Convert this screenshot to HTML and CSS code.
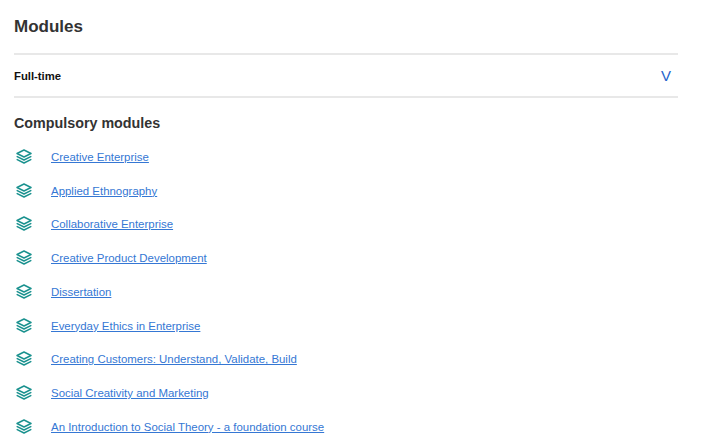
FILE: index.html
```html
<!DOCTYPE html>
<html lang="en">
<head>
    <meta charset="UTF-8">
    <title>Modules</title>
    <link rel="stylesheet" href="styles.css">
</head>
<body>
    <svg class="icon-defs" width="0" height="0" aria-hidden="true">
        <symbol id="layers" viewBox="0 0 16 15">
            <path d="M8 1 L15 4.5 L8 8 L1 4.5 Z" fill="none" stroke="currentColor" stroke-width="1.5" stroke-linejoin="round"/>
            <path d="M1.2 7.6 L8 11 L14.8 7.6" fill="none" stroke="currentColor" stroke-width="1.5" stroke-linecap="round" stroke-linejoin="round"/>
            <path d="M1.2 10.6 L8 14 L14.8 10.6" fill="none" stroke="currentColor" stroke-width="1.5" stroke-linecap="round" stroke-linejoin="round"/>
        </symbol>
    </svg>

    <div class="container">
        <h1>Modules</h1>

        <div class="accordion">
            <span class="accordion-title">Full-time</span>
            <span class="accordion-toggle">V</span>
        </div>

        <h2>Compulsory modules</h2>

        <ul class="module-list">
            <li><svg class="module-icon"><use href="#layers"/></svg><a href="#">Creative Enterprise</a></li>
            <li><svg class="module-icon"><use href="#layers"/></svg><a href="#">Applied Ethnography</a></li>
            <li><svg class="module-icon"><use href="#layers"/></svg><a href="#">Collaborative Enterprise</a></li>
            <li><svg class="module-icon"><use href="#layers"/></svg><a href="#">Creative Product Development</a></li>
            <li><svg class="module-icon"><use href="#layers"/></svg><a href="#">Dissertation</a></li>
            <li><svg class="module-icon"><use href="#layers"/></svg><a href="#">Everyday Ethics in Enterprise</a></li>
            <li><svg class="module-icon"><use href="#layers"/></svg><a href="#">Creating Customers: Understand, Validate, Build</a></li>
            <li><svg class="module-icon"><use href="#layers"/></svg><a href="#">Social Creativity and Marketing</a></li>
            <li><svg class="module-icon"><use href="#layers"/></svg><a href="#">An Introduction to Social Theory - a foundation course</a></li>
        </ul>
    </div>
</body>
</html>
```

FILE: styles.css
```css
* {
    margin: 0;
    padding: 0;
    box-sizing: border-box;
}

html, body {
    height: 447px;
    overflow: hidden;
}

body {
    font-family: "Liberation Sans", Arial, sans-serif;
    background-color: white;
    color: #333;
}

.icon-defs {
    position: absolute;
}

.container {
    width: 664px;
    margin-left: 14px;
    padding-top: 16px;
}

h1 {
    font-size: 17px;
    line-height: 21px;
    font-weight: bold;
    margin-bottom: 16px;
}

.accordion {
    height: 45px;
    display: flex;
    align-items: center;
    justify-content: space-between;
    border-top: 2px solid #e8e8e8;
    border-bottom: 2px solid #e8e8e8;
}

.accordion-title {
    font-size: 11.3px;
    font-weight: bold;
    color: #111;
}

.accordion-toggle {
    font-size: 15px;
    color: #2563cc;
    padding-right: 7px;
}

h2 {
    font-size: 14.3px;
    line-height: 18px;
    font-weight: bold;
    margin-top: 16px;
    margin-bottom: 8px;
}

.module-list {
    list-style: none;
}

.module-list li {
    height: 33.75px;
    display: flex;
    align-items: center;
    font-size: 11.45px;
}

.module-icon {
    width: 16px;
    height: 15px;
    margin-left: 2px;
    margin-right: 19px;
    margin-top: -1px;
    color: #1b928f;
    flex-shrink: 0;
}

.module-list a {
    color: #3577d4;
    text-decoration: underline;
}
```
